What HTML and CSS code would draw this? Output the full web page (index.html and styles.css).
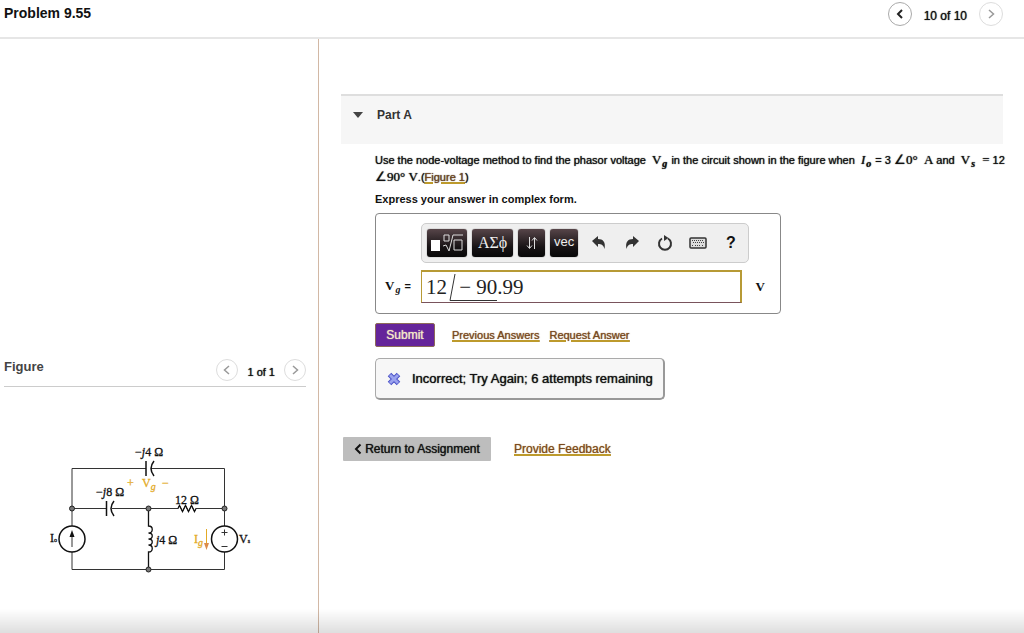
FILE: index.html
```html
<!DOCTYPE html>
<html lang="en">
<head>
<meta charset="utf-8">
<meta name="viewport" content="width=device-width, initial-scale=1">
<title>Problem 9.55</title>
<link rel="stylesheet" href="styles.css">
</head>
<body>
<header class="topbar">
  <h1 class="title">Problem 9.55</h1>
  <nav class="pager" aria-label="Problems">
    <button class="round active" aria-label="Previous problem"><svg viewBox="0 0 10 10"><path d="M7 1 3 5l4 4"/></svg></button>
    <span>10 of 10</span>
    <button class="round" aria-label="Next problem"><svg viewBox="0 0 10 10"><path d="M3 1l4.500 4L3 9"/></svg></button>
  </nav>
</header>
<div class="page">
  <aside class="side">
    <section class="figure" id="figure">
      <div class="figure-head">
        <h2>Figure</h2>
        <nav class="pager small" aria-label="Figures">
          <button class="round" aria-label="Previous figure"><svg viewBox="0 0 10 10"><path d="M7 1 2.500 5 7 9"/></svg></button>
          <span>1 of 1</span>
          <button class="round" aria-label="Next figure"><svg viewBox="0 0 10 10"><path d="M3 1l4.500 4L3 9"/></svg></button>
        </nav>
      </div>
      <svg class="circuit" viewBox="0 0 220 145" role="img" aria-label="Circuit diagram">
        <g class="wire">
          <path d="M32 91V33.500H106M111 33.500H184.500V91M32 73.500H67M72 73.500H138l1.500-3 3 6 3-6 3 6 3-6 3 6 1.500-3H184.500M32 117V134.500H184.500V117"/>
          <path class="coil" d="M108.500 73.500V91c5 0 5 7 0 7c5 0 5 6 0 6c5 0 5 6 0 6c5 0 5 7 0 7V134.500"/>
          <path class="plate" d="M106 26V41M114 26q-6 7.500 0 15M66.500 66V81M74 66q-6 7.500 0 15"/>
          <path class="resistor" d="M138 73.500l1.500-3 3 6 3-6 3 6 3-6 3 6 1.500-3"/>
          <circle class="source" cx="32" cy="104" r="13"/>
          <circle class="source" cx="184.500" cy="104" r="13"/>
          <path d="M32 112V99M181.500 97.500h6M184.500 94.500v6M181.500 111.500h6"/>
        </g>
        <path class="head" d="M32 95l2.500 7h-5z"/>
        <g class="node"><circle cx="32" cy="73.500" r="2.500"/><circle cx="108.500" cy="73.500" r="2.500"/><circle cx="184.500" cy="73.500" r="2.500"/><circle cx="108.500" cy="134.500" r="2.500"/></g>
        <g class="label">
          <text x="95" y="21">−<tspan class="it">j</tspan>4 Ω</text>
          <text x="56" y="61">−<tspan class="it">j</tspan>8 Ω</text>
          <text x="135" y="69">12 Ω</text>
          <text x="116" y="109"><tspan class="it">j</tspan>4 Ω</text>
          <text x="10" y="107">I<tspan class="tiny">o</tspan></text>
          <text x="199" y="108">V<tspan class="tiny">s</tspan></text>
        </g>
        <g class="label gold">
          <text x="87" y="52">+</text>
          <text x="102" y="52">V<tspan class="sub it" dy="3">g</tspan></text>
          <text x="122" y="52">−</text>
          <text x="154" y="108">I<tspan class="sub it" dy="3">g</tspan></text>
        </g>
        <path class="arrow-line" d="M166.500 94v14"/>
        <path class="arrow-head" d="M164 108h5l-2.500 7z"/>
      </svg>
    </section>
  </aside>
  <main class="content">
    <button class="part" aria-expanded="true">
      <svg viewBox="0 0 10 6"><path d="M0 0h10L5 6z"/></svg>
      <span>Part A</span>
    </button>
    <div class="body">
      <p class="question">Use the node-voltage method to find the phasor voltage <span class="math gap">V</span><sub>g</sub> in the circuit shown in the figure when <span class="math it gap">I</span><sub>o</sub> = 3 <span class="math">∠0°&nbsp;</span><span class="math gap">A</span> and <span class="math gap">V</span><sub>s</sub> <span class="math gap">=</span> 12 <br><span class="math">∠90°&nbsp;</span><span class="math">V</span>.(<a class="link" href="#figure">Figure 1</a>)</p>
      <p class="hint">Express your answer in complex form.</p>
      <form class="answer">
        <div class="tools">
          <button type="button" class="key wide" aria-label="Templates"><svg viewBox="0 0 34 22"><path class="solid" d="M1 8h9v11H1z"/><path d="M13 14l3-1 3 6 4-16h10M14 3h5v6h-5zM24 8h8v10h-8z"/></svg></button>
          <button type="button" class="key wide greek">ΑΣϕ</button>
          <button type="button" class="key arrows" aria-label="Arrows"><svg viewBox="0 0 12 14"><path d="M3.500 1v11M1 9.500l2.500 3 2.500-3M8.500 13V2M6 4.500l2.500-3 2.500 3"/></svg></button>
          <button type="button" class="key vec">vec</button>
          <div class="icons">
            <button type="button" class="icon" aria-label="Undo"><svg viewBox="0 0 16 16"><path class="fill" d="M1 6 7 1v3c5 0 8 3 6.500 10-1-4-3-5-6.500-5v3z"/></svg></button>
            <button type="button" class="icon" aria-label="Redo"><svg viewBox="0 0 16 16"><path class="fill" d="M15 6 9 1v3c-5 0-8 3-6.500 10 1-4 3-5 6.500-5v3z"/></svg></button>
            <button type="button" class="icon" aria-label="Reset"><svg viewBox="0 0 16 16"><path class="ring" d="M11 3.500a6 6 0 1 1-6 0"/><path class="fill" d="M7 0l4.500 3L7 6z"/></svg></button>
            <button type="button" class="icon" aria-label="Keyboard"><svg class="keyboard" viewBox="0 0 18 12"><rect class="case" x="1" y="1" width="16" height="10" rx="1"/><path class="dots" d="M3 3.500h12M4 5.500h11M3 8.500h2M6 8.500h6M13 8.500h2"/></svg></button>
            <button type="button" class="icon help" aria-label="Help">?</button>
          </div>
        </div>
        <div class="entry">
          <label for="vg"><span class="math">V</span><sub>g</sub> =</label>
          <div class="field">
            <input id="vg" type="text" value="12&nbsp;&nbsp;&#8202;− 90.99">
            <svg class="angle" viewBox="0 0 48 28"><path d="M6 0 1 26.500H48"/></svg>
          </div>
          <span class="unit">V</span>
        </div>
      </form>
      <div class="actions">
        <button class="submit">Submit</button>
        <a class="link strong" href="#previous">Previous Answers</a>
        <a class="link strong" href="#request">Request Answer</a>
      </div>
      <div class="feedback" role="status">
        <svg viewBox="0 0 14 14"><path class="cross-edge" d="M2.500 2.500l9 9M11.500 2.500l-9 9"/><path class="cross" d="M3 3l8 8M11 3l-8 8"/></svg>
        <span>Incorrect; Try Again; 6 attempts remaining</span>
      </div>
    </div>
    <footer class="bottom">
      <button class="return"><svg viewBox="0 0 8 12"><path d="M6.500 1.500 2 6l4.500 4.500"/></svg>Return to Assignment</button>
      <a class="link large" href="#feedback">Provide Feedback</a>
    </footer>
  </main>
</div>
<div class="fade"></div>
</body>
</html>
```
FILE: styles.css
```css
* { box-sizing: border-box; }
body {
  margin: 0;
  min-height: 100vh;
  display: flex;
  flex-direction: column;
  background: #fff;
  color: #111;
  font-family: "Liberation Sans", Arial, sans-serif;
  font-size: 11px;
}
h1, h2, p { margin: 0; }
button { font: inherit; color: inherit; padding: 0; border: 0; background: none; }
svg { display: block; fill: none; }

.topbar {
  display: flex;
  justify-content: space-between;
  align-items: flex-start;
  height: 39px;
  padding: 2px 21px 0 4px;
  border-bottom: 2px solid #e6e6e6;
}
.title { font-size: 14px; line-height: 22px; }
.pager { display: flex; align-items: center; gap: 12px; font-size: 12px; text-shadow: 0 0 1px #111; }
.pager span { padding-top: 3px; }
.round {
  display: grid;
  place-items: center;
  width: 24px;
  height: 24px;
  border: 1px solid #ddd;
  border-radius: 50%;
}
.round svg { width: 10px; height: 10px; stroke: #999; stroke-width: 1.5; }
.round.active { border-color: #aaa; }
.round.active svg { stroke: #222; stroke-width: 2; }
.small { gap: 9px; font-size: 11px; }
.small .round { width: 22px; height: 22px; }

.page { flex: 1; display: grid; grid-template-columns: 319px minmax(0, 1fr); }
.side { padding-top: 314px; border-right: 1px solid #d2b8a5; }
.figure { padding: 0 12px 0 4px; }
.figure-head {
  display: flex;
  justify-content: space-between;
  align-items: flex-start;
  height: 34px;
  padding-top: 6px;
  border-bottom: 1px solid #ccc;
}
.figure-head h2 { font-size: 13px; line-height: 16px; color: #444; }
.circuit { width: 220px; margin: 48px 0 0 36px; }
.wire { stroke: #333; stroke-width: 1; }
.plate, .source { stroke: #111; stroke-width: 1.5; }
.coil, .resistor { stroke: #111; stroke-width: 1.3; }
.head { fill: #111; }
.node { fill: #777; stroke: #222; }
.label { font-family: "Liberation Serif", serif; font-size: 12px; fill: #111; stroke: #111; stroke-width: 0.3; }
.gold { fill: #e3aa25; stroke: #e3aa25; }
.it { font-style: italic; }
.tiny { font-size: 6px; }
.sub { font-size: 10px; }
.arrow-line { stroke: #e3aa25; }
.arrow-head { fill: #dc8c4c; }

.content { padding: 55px 21px 0 22px; }
.part {
  display: flex;
  align-items: flex-start;
  gap: 14px;
  width: 100%;
  height: 50px;
  padding: 12px;
  background: #f6f6f6;
  border-top: 2px solid #dedede;
  font-size: 12px;
  font-weight: bold;
  line-height: 14px;
  text-align: left;
  color: #333;
}
.part svg { width: 10px; height: 6px; margin-top: 4px; fill: #444; }
.body { padding-left: 34px; }
.question { padding-top: 8px; line-height: 16px; text-shadow: 0 0 1px #111; white-space: nowrap; }
.math { font-family: "Liberation Serif", serif; font-size: 13px; line-height: 1; }
.gap { margin-left: 3px; }
sub { margin: 0 1px; font: italic bold 10px/1 "Liberation Serif", serif; vertical-align: -3px; }
.hint { padding-top: 7px; font-weight: bold; line-height: 14px; }
.link { color: #7a4a1e; text-decoration-color: #bd9a2c; text-decoration-thickness: 2px; text-underline-offset: 1px; }
.strong { line-height: 22px; text-shadow: 0 0 1px #7a4a1e; }
.large { font-size: 12px; text-shadow: 0 0 1px #a8742e; }

.answer {
  width: 406px;
  max-width: 100%;
  margin-top: 7px;
  padding: 9px 31px 10px 45px;
  border: 1px solid #888;
  border-radius: 4px;
}
.tools {
  display: flex;
  align-items: center;
  gap: 5px;
  height: 40px;
  padding: 0 5px;
  background: #efefef;
  border: 1px solid #ccc;
  border-radius: 5px;
}
.key {
  display: grid;
  place-items: center;
  width: 28px;
  height: 28px;
  border-radius: 3px;
  background: linear-gradient(#574549, #171315 65%, #080808);
  box-shadow: 0 0 1px #333;
  color: #eee;
}
.wide { width: 41px; }
.wide svg { width: 34px; height: 22px; stroke: #ddd; }
.wide .solid { fill: #fff; stroke: none; }
.greek { font-family: "Liberation Serif", serif; font-size: 16px; }
.arrows svg { width: 12px; height: 14px; stroke: #ddd; }
.vec { font-size: 13px; line-height: 22px; padding-bottom: 3px; }
.icons { display: flex; gap: 9px; padding-left: 4px; }
.icon { display: grid; place-items: center; width: 24px; height: 24px; }
.icon svg { width: 16px; height: 16px; }
.fill { fill: #333; }
.ring { stroke: #333; stroke-width: 2; }
.icon .keyboard { width: 18px; height: 12px; }
.case { stroke: #333; fill: #ddd; stroke-width: 1.5; }
.dots { stroke: #444; stroke-dasharray: 1 1; }
.help { font-size: 16px; font-weight: bold; }

.entry { display: grid; grid-template-columns: 36px minmax(0, 1fr) 20px; align-items: center; margin: 7px -19px 0 -36px; }
.entry label { font-weight: bold; white-space: nowrap; }
.entry .math, .unit { font-family: "Liberation Serif", serif; font-size: 13px; font-weight: bold; }
.unit { text-align: right; margin-right: 3px; }
.field { position: relative; width: 321px; max-width: 100%; }
.field input {
  display: block;
  width: 100%;
  height: 33px;
  padding: 0 4px;
  border: 2px solid #b79a35;
  border-left-width: 1px;
  border-bottom: 1px solid #79535c;
  border-radius: 0;
  background: #fff;
  color: #222;
  font-family: "Liberation Serif", serif;
  font-size: 21px;
}
.angle { position: absolute; left: 28px; top: 4px; width: 48px; height: 28px; stroke: #333; pointer-events: none; }

.actions { display: flex; align-items: center; gap: 10px; margin-top: 9px; }
.submit {
  width: 60px;
  height: 24px;
  margin-right: 7px;
  border: 1px solid #8d6a59;
  border-radius: 2px;
  background: #65249a;
  color: #f4e8c8;
  font-size: 12px;
  text-shadow: 0 0 1px #f4e8c8;
}
.feedback {
  display: flex;
  align-items: center;
  gap: 11px;
  width: 290px;
  height: 42px;
  margin-top: 11px;
  padding-left: 11px;
  border: 1px solid #aaa;
  border-right: 2px solid #999;
  border-bottom: 2px solid #999;
  border-radius: 5px;
  background: #f7f7f7;
  font-size: 13px;
  text-shadow: 0 0 1px #111;
}
.feedback svg { width: 14px; height: 14px; }
.cross-edge { stroke: #4a51c8; stroke-width: 5; }
.cross { stroke: #9aa2ee; stroke-width: 3; }
.bottom { display: flex; align-items: center; gap: 23px; padding: 37px 0 0 2px; }
.return {
  display: flex;
  align-items: center;
  justify-content: center;
  gap: 3px;
  width: 148px;
  height: 24px;
  background: #bdbdbd;
  border-radius: 1px;
  font-size: 12px;
  text-shadow: 0 0 1px #111;
}
.return svg { width: 8px; height: 12px; stroke: #111; stroke-width: 2; }
.fade {
  position: fixed;
  inset: auto 0 0;
  height: 24px;
  background: linear-gradient(transparent, rgba(0, 0, 0, 0.13));
  pointer-events: none;
}
```
